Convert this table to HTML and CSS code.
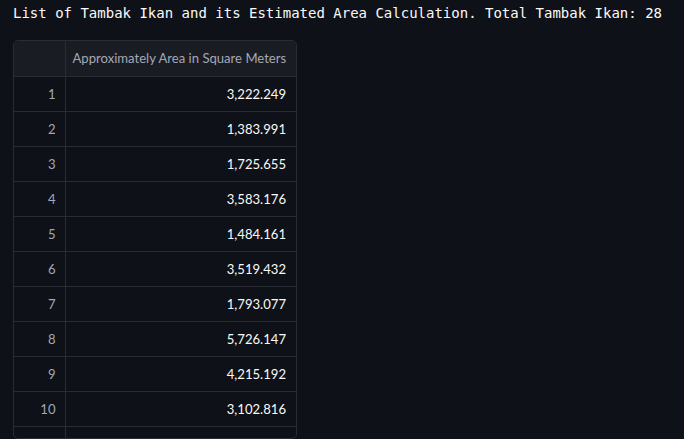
FILE: index.html
```html
<!DOCTYPE html>
<html>
<head>
<meta charset="utf-8">
<link rel="stylesheet" href="styles.css">
</head>
<body>
<div class="page">
  <p class="caption">List of Tambak Ikan and its Estimated Area Calculation. Total Tambak Ikan: 28</p>
  <div class="frame">
    <table class="grid">
      <colgroup><col class="c-idx"><col class="c-val"></colgroup>
      <thead>
        <tr><th class="idx"></th><th class="col">Approximately Area in Square Meters</th></tr>
      </thead>
      <tbody>
        <tr><td class="idx">1</td><td class="val">3,222.249</td></tr>
        <tr><td class="idx">2</td><td class="val">1,383.991</td></tr>
        <tr><td class="idx">3</td><td class="val">1,725.655</td></tr>
        <tr><td class="idx">4</td><td class="val">3,583.176</td></tr>
        <tr><td class="idx">5</td><td class="val">1,484.161</td></tr>
        <tr><td class="idx">6</td><td class="val">3,519.432</td></tr>
        <tr><td class="idx">7</td><td class="val">1,793.077</td></tr>
        <tr><td class="idx">8</td><td class="val">5,726.147</td></tr>
        <tr><td class="idx">9</td><td class="val">4,215.192</td></tr>
        <tr><td class="idx">10</td><td class="val">3,102.816</td></tr>
        <tr><td class="idx"></td><td class="val"></td></tr>
      </tbody>
    </table>
  </div>
</div>
</body>
</html>
```

FILE: styles.css
```css
html, body {
  margin: 0;
  padding: 0;
  background: #0e1117;
  height: 100%;
  overflow: hidden;
}
.page {
  padding: 4px 0 0 13px;
}
.caption {
  margin: 0;
  font-family: "DejaVu Sans Mono", monospace;
  font-size: 14px;
  line-height: 18px;
  color: #fafafa;
  white-space: pre;
}
.frame {
  margin-top: 18px;
  width: 282px;
  height: 397px;
  border: 1px solid #2a2c34;
  border-radius: 5px;
  overflow: hidden;
}
.grid {
  border-collapse: collapse;
  table-layout: fixed;
  width: 100%;
  font-family: "Lato", sans-serif;
  font-size: 13.1px;
}
.c-idx { width: 51px; }
.grid th, .grid td {
  border: 1px solid #2a2c34;
  padding: 0 9px 0 7px;
  box-sizing: border-box;
}
.grid tr:first-child th { border-top: none; }
.grid th:first-child, .grid td:first-child { border-left: none; }
.grid th:last-child, .grid td:last-child { border-right: none; }
.grid thead th {
  height: 35px;
  background: #1a1c24;
  color: #a3a8b4;
  font-weight: 400;
  text-align: left;
  white-space: nowrap;
}
.grid .idx {
  text-align: right;
  color: #a3a8b4;
}
.grid td.val {
  text-align: right;
  color: #fafafa;
  padding-right: 10px;
}
.grid tbody td { height: 35px; }
```
